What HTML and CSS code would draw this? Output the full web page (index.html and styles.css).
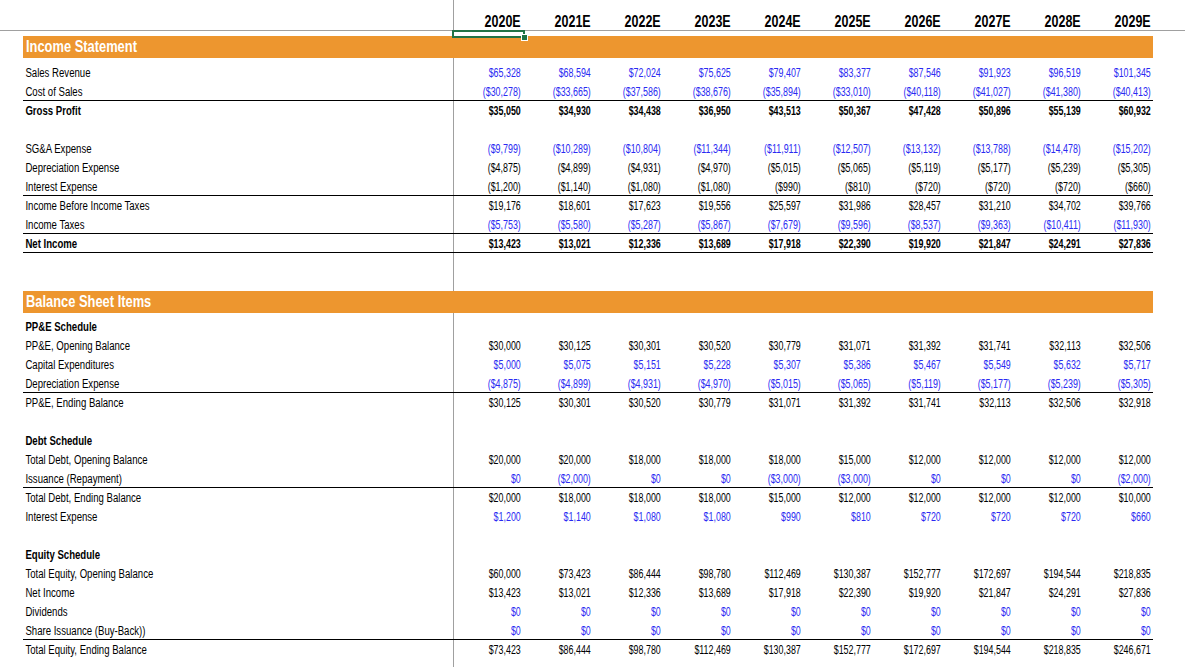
FILE: index.html
```html
<!DOCTYPE html>
<html lang="en">
<head>
<meta charset="utf-8">
<title>Three Statement Model</title>
<link rel="stylesheet" href="styles.css">
</head>
<body>
<div class="sheet">
  <div class="row head">
    <div></div><div class="lab"></div>
    <div class="v">2020E</div><div class="v">2021E</div><div class="v">2022E</div><div class="v">2023E</div><div class="v">2024E</div><div class="v">2025E</div><div class="v">2026E</div><div class="v">2027E</div><div class="v">2028E</div><div class="v">2029E</div>
  </div>
  <div class="row gap">
    <div></div><div class="lab"></div><div class="sel"><span class="selbox"></span><span class="handle"></span></div>
  </div>
  <div class="row bar"><div></div><div class="title"><span>Income Statement</span></div></div>
  <div class="row gap wide"></div>

  <div class="row blue">
    <div></div><div class="lab">Sales Revenue</div>
    <div class="v">$65,328</div><div class="v">$68,594</div><div class="v">$72,024</div><div class="v">$75,625</div><div class="v">$79,407</div><div class="v">$83,377</div><div class="v">$87,546</div><div class="v">$91,923</div><div class="v">$96,519</div><div class="v">$101,345</div>
  </div>
  <div class="row blue rule">
    <div></div><div class="lab">Cost of Sales</div>
    <div class="v">($30,278)</div><div class="v">($33,665)</div><div class="v">($37,586)</div><div class="v">($38,676)</div><div class="v">($35,894)</div><div class="v">($33,010)</div><div class="v">($40,118)</div><div class="v">($41,027)</div><div class="v">($41,380)</div><div class="v">($40,413)</div>
  </div>
  <div class="row strong">
    <div></div><div class="lab">Gross Profit</div>
    <div class="v">$35,050</div><div class="v">$34,930</div><div class="v">$34,438</div><div class="v">$36,950</div><div class="v">$43,513</div><div class="v">$50,367</div><div class="v">$47,428</div><div class="v">$50,896</div><div class="v">$55,139</div><div class="v">$60,932</div>
  </div>
  <div class="row"></div>
  <div class="row blue">
    <div></div><div class="lab">SG&amp;A Expense</div>
    <div class="v">($9,799)</div><div class="v">($10,289)</div><div class="v">($10,804)</div><div class="v">($11,344)</div><div class="v">($11,911)</div><div class="v">($12,507)</div><div class="v">($13,132)</div><div class="v">($13,788)</div><div class="v">($14,478)</div><div class="v">($15,202)</div>
  </div>
  <div class="row">
    <div></div><div class="lab">Depreciation Expense</div>
    <div class="v">($4,875)</div><div class="v">($4,899)</div><div class="v">($4,931)</div><div class="v">($4,970)</div><div class="v">($5,015)</div><div class="v">($5,065)</div><div class="v">($5,119)</div><div class="v">($5,177)</div><div class="v">($5,239)</div><div class="v">($5,305)</div>
  </div>
  <div class="row rule">
    <div></div><div class="lab">Interest Expense</div>
    <div class="v">($1,200)</div><div class="v">($1,140)</div><div class="v">($1,080)</div><div class="v">($1,080)</div><div class="v">($990)</div><div class="v">($810)</div><div class="v">($720)</div><div class="v">($720)</div><div class="v">($720)</div><div class="v">($660)</div>
  </div>
  <div class="row">
    <div></div><div class="lab">Income Before Income Taxes</div>
    <div class="v">$19,176</div><div class="v">$18,601</div><div class="v">$17,623</div><div class="v">$19,556</div><div class="v">$25,597</div><div class="v">$31,986</div><div class="v">$28,457</div><div class="v">$31,210</div><div class="v">$34,702</div><div class="v">$39,766</div>
  </div>
  <div class="row blue rule">
    <div></div><div class="lab">Income Taxes</div>
    <div class="v">($5,753)</div><div class="v">($5,580)</div><div class="v">($5,287)</div><div class="v">($5,867)</div><div class="v">($7,679)</div><div class="v">($9,596)</div><div class="v">($8,537)</div><div class="v">($9,363)</div><div class="v">($10,411)</div><div class="v">($11,930)</div>
  </div>
  <div class="row strong rule">
    <div></div><div class="lab">Net Income</div>
    <div class="v">$13,423</div><div class="v">$13,021</div><div class="v">$12,336</div><div class="v">$13,689</div><div class="v">$17,918</div><div class="v">$22,390</div><div class="v">$19,920</div><div class="v">$21,847</div><div class="v">$24,291</div><div class="v">$27,836</div>
  </div>
  <div class="row"></div>
  <div class="row"></div>

  <div class="row bar"><div></div><div class="title"><span>Balance Sheet Items</span></div></div>
  <div class="row gap"></div>

  <div class="row strong"><div></div><div class="lab">PP&amp;E Schedule</div></div>
  <div class="row">
    <div></div><div class="lab">PP&amp;E, Opening Balance</div>
    <div class="v">$30,000</div><div class="v">$30,125</div><div class="v">$30,301</div><div class="v">$30,520</div><div class="v">$30,779</div><div class="v">$31,071</div><div class="v">$31,392</div><div class="v">$31,741</div><div class="v">$32,113</div><div class="v">$32,506</div>
  </div>
  <div class="row blue">
    <div></div><div class="lab">Capital Expenditures</div>
    <div class="v">$5,000</div><div class="v">$5,075</div><div class="v">$5,151</div><div class="v">$5,228</div><div class="v">$5,307</div><div class="v">$5,386</div><div class="v">$5,467</div><div class="v">$5,549</div><div class="v">$5,632</div><div class="v">$5,717</div>
  </div>
  <div class="row blue rule">
    <div></div><div class="lab">Depreciation Expense</div>
    <div class="v">($4,875)</div><div class="v">($4,899)</div><div class="v">($4,931)</div><div class="v">($4,970)</div><div class="v">($5,015)</div><div class="v">($5,065)</div><div class="v">($5,119)</div><div class="v">($5,177)</div><div class="v">($5,239)</div><div class="v">($5,305)</div>
  </div>
  <div class="row">
    <div></div><div class="lab">PP&amp;E, Ending Balance</div>
    <div class="v">$30,125</div><div class="v">$30,301</div><div class="v">$30,520</div><div class="v">$30,779</div><div class="v">$31,071</div><div class="v">$31,392</div><div class="v">$31,741</div><div class="v">$32,113</div><div class="v">$32,506</div><div class="v">$32,918</div>
  </div>
  <div class="row"></div>

  <div class="row strong"><div></div><div class="lab">Debt Schedule</div></div>
  <div class="row">
    <div></div><div class="lab">Total Debt, Opening Balance</div>
    <div class="v">$20,000</div><div class="v">$20,000</div><div class="v">$18,000</div><div class="v">$18,000</div><div class="v">$18,000</div><div class="v">$15,000</div><div class="v">$12,000</div><div class="v">$12,000</div><div class="v">$12,000</div><div class="v">$12,000</div>
  </div>
  <div class="row blue rule">
    <div></div><div class="lab">Issuance (Repayment)</div>
    <div class="v">$0</div><div class="v">($2,000)</div><div class="v">$0</div><div class="v">$0</div><div class="v">($3,000)</div><div class="v">($3,000)</div><div class="v">$0</div><div class="v">$0</div><div class="v">$0</div><div class="v">($2,000)</div>
  </div>
  <div class="row">
    <div></div><div class="lab">Total Debt, Ending Balance</div>
    <div class="v">$20,000</div><div class="v">$18,000</div><div class="v">$18,000</div><div class="v">$18,000</div><div class="v">$15,000</div><div class="v">$12,000</div><div class="v">$12,000</div><div class="v">$12,000</div><div class="v">$12,000</div><div class="v">$10,000</div>
  </div>
  <div class="row blue">
    <div></div><div class="lab">Interest Expense</div>
    <div class="v">$1,200</div><div class="v">$1,140</div><div class="v">$1,080</div><div class="v">$1,080</div><div class="v">$990</div><div class="v">$810</div><div class="v">$720</div><div class="v">$720</div><div class="v">$720</div><div class="v">$660</div>
  </div>
  <div class="row"></div>

  <div class="row strong"><div></div><div class="lab">Equity Schedule</div></div>
  <div class="row">
    <div></div><div class="lab">Total Equity, Opening Balance</div>
    <div class="v">$60,000</div><div class="v">$73,423</div><div class="v">$86,444</div><div class="v">$98,780</div><div class="v">$112,469</div><div class="v">$130,387</div><div class="v">$152,777</div><div class="v">$172,697</div><div class="v">$194,544</div><div class="v">$218,835</div>
  </div>
  <div class="row">
    <div></div><div class="lab">Net Income</div>
    <div class="v">$13,423</div><div class="v">$13,021</div><div class="v">$12,336</div><div class="v">$13,689</div><div class="v">$17,918</div><div class="v">$22,390</div><div class="v">$19,920</div><div class="v">$21,847</div><div class="v">$24,291</div><div class="v">$27,836</div>
  </div>
  <div class="row blue">
    <div></div><div class="lab">Dividends</div>
    <div class="v">$0</div><div class="v">$0</div><div class="v">$0</div><div class="v">$0</div><div class="v">$0</div><div class="v">$0</div><div class="v">$0</div><div class="v">$0</div><div class="v">$0</div><div class="v">$0</div>
  </div>
  <div class="row blue rule">
    <div></div><div class="lab">Share Issuance (Buy-Back))</div>
    <div class="v">$0</div><div class="v">$0</div><div class="v">$0</div><div class="v">$0</div><div class="v">$0</div><div class="v">$0</div><div class="v">$0</div><div class="v">$0</div><div class="v">$0</div><div class="v">$0</div>
  </div>
  <div class="row">
    <div></div><div class="lab">Total Equity, Ending Balance</div>
    <div class="v">$73,423</div><div class="v">$86,444</div><div class="v">$98,780</div><div class="v">$112,469</div><div class="v">$130,387</div><div class="v">$152,777</div><div class="v">$172,697</div><div class="v">$194,544</div><div class="v">$218,835</div><div class="v">$246,671</div>
  </div>
  <div class="row"></div>
</div>
</body>
</html>
```

FILE: styles.css
```css
html, body {
  margin: 0;
  padding: 0;
  background: #ffffff;
}

body {
  font-family: "Liberation Sans", Arial, sans-serif;
  font-size: 12px;
  color: #000000;
  overflow: hidden;
}

.sheet {
  width: 1185px;
  height: 667px;
  overflow: hidden;
}

/* every sheet row: spacer col, label col, ten year cols; the frozen-pane
   divider at x=453 is painted as a 1px background stripe */
.row {
  display: grid;
  grid-template-columns: 23px 430px repeat(10, 70px) 1fr;
  height: 19px;
  box-sizing: border-box;
  background: linear-gradient(#a0a0a0, #a0a0a0) 453px 0 / 1px 100% no-repeat;
}

.row.rule {
  background:
    linear-gradient(#000000, #000000) 23px 100% / 1130px 1px no-repeat,
    linear-gradient(#a0a0a0, #a0a0a0) 453px 0 / 1px 100% no-repeat;
}

.row > div {
  white-space: nowrap;
}

/* Arial-Narrow-like text: Arial metrics compressed horizontally */
.lab {
  padding-left: 3px;
  line-height: 21px;
  transform: scaleX(0.8);
  transform-origin: left center;
}

.v {
  text-align: right;
  padding-right: 3px;
  line-height: 21px;
  transform: scaleX(0.74);
  transform-origin: right center;
}

.row.head {
  height: 31px;
  border-bottom: 1px solid #a0a0a0;
}

.row.head .v {
  font-weight: bold;
  font-size: 16px;
  line-height: 18px;
  padding-top: 13px;
  transform: scaleX(0.78);
}

.row.gap {
  height: 5px;
}

.row.gap.wide {
  height: 6px;
}

.row.bar {
  height: 21px;
}

.row.bar .title {
  grid-column: 2 / 13;
  background: #ed962f;
  color: #ffffff;
  font-weight: bold;
  font-size: 16px;
  line-height: 22px;
  padding-left: 3px;
}

.row.bar .title span {
  display: inline-block;
  transform: scaleX(0.805);
  transform-origin: left center;
}

.blue .v {
  color: #2a2af2;
}

.strong .lab,
.strong .v {
  font-weight: bold;
}

.sel {
  grid-column: 3;
  position: relative;
}

.selbox {
  position: absolute;
  left: -1px;
  top: -1px;
  right: -2px;
  bottom: -2px;
  border: 2px solid #217346;
}

.handle {
  position: absolute;
  right: -4px;
  bottom: -4px;
  width: 5px;
  height: 5px;
  background: #217346;
  outline: 1px solid #ffffff;
}
```
